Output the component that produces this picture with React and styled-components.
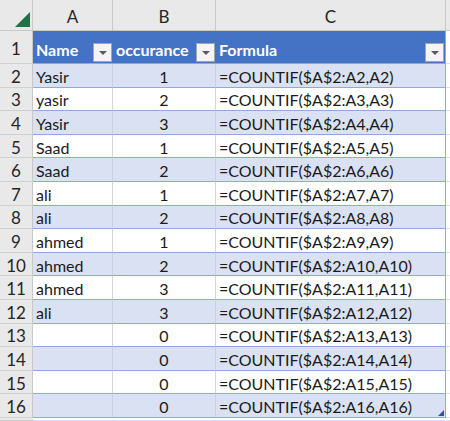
import React from "react";
import styled, { createGlobalStyle } from "styled-components";

const Global = createGlobalStyle`
  html, body { margin: 0; padding: 0; background: #fff; }
  body { font-family: Lato, "Open Sans", sans-serif; }
`;

const Sheet = styled.div`
  display: grid;
  grid-template-columns: 33px 80px 103px 230px 1fr;
  grid-template-rows: 31px 33px repeat(15, 23.6px) 1fr;
  width: 450px;
  height: 421px;
  overflow: hidden;
  font-size: 16px;
  color: #1a1a1a;
`;

const Corner = styled.div`
  position: relative;
  background: #e9e9e9;
  border-right: 1px solid #c8c8c8;
  border-bottom: 1px solid #c8c8c8;
  box-sizing: border-box;
  &::after {
    content: "";
    position: absolute;
    right: 2px;
    bottom: 3px;
    width: 0;
    height: 0;
    border-left: 15px solid transparent;
    border-bottom: 15px solid #217346;
  }
`;

const ColHead = styled.div`
  display: flex;
  align-items: center;
  justify-content: center;
  padding-top: 3px;
  background: #e9e9e9;
  border-right: 1px solid #c8c8c8;
  border-bottom: 1px solid #c8c8c8;
  box-sizing: border-box;
  font-size: 17px;
  color: #262626;
`;

const RowHead = styled.div`
  display: flex;
  align-items: center;
  justify-content: center;
  padding-top: 2px;
  background: #e9e9e9;
  border-right: 1px solid #c8c8c8;
  border-bottom: 1px solid #d0d0d0;
  box-sizing: border-box;
  font-size: 17px;
  color: #262626;
`;

const HeadCell = styled.div`
  position: relative;
  display: flex;
  align-items: center;
  padding: 4px 0 0 3px;
  background: #4472c4;
  color: #fff;
  font-weight: 700;
  border-bottom: 1px solid #8ea9db;
  border-right: ${(p) => (p.$last ? "1px solid #8ea9db" : "none")};
  box-sizing: border-box;
  white-space: nowrap;
  overflow: hidden;
`;

const Filter = styled.span`
  position: absolute;
  right: 1px;
  bottom: 1px;
  width: 19px;
  height: 19px;
  box-sizing: border-box;
  background: #f4f4f4;
  border: 1px solid #a6a6a6;
  display: flex;
  align-items: center;
  justify-content: center;
  &::after {
    content: "";
    border-left: 4px solid transparent;
    border-right: 4px solid transparent;
    border-top: 4px solid #5a5a5a;
  }
`;

const Cell = styled.div`
  position: relative;
  display: flex;
  align-items: center;
  justify-content: ${(p) => (p.$center ? "center" : "flex-start")};
  padding: 2px 0 0 ${(p) => (p.$center ? "0" : "3px")};
  background: ${(p) => (p.$band ? "#d9e1f2" : "#fff")};
  border-bottom: 1px solid #8ea9db;
  border-right: 1px solid ${(p) => (p.$last ? "#8ea9db" : p.$band ? "#c9d1e0" : "#d4d4d4")};
  box-sizing: border-box;
  white-space: nowrap;
  overflow: hidden;
`;

const Resize = styled.span`
  position: absolute;
  right: 1px;
  bottom: 1px;
  width: 0;
  height: 0;
  border-left: 6px solid transparent;
  border-bottom: 6px solid #2f5597;
`;

const Blank = styled.div`
  background: ${(p) => (p.$head ? "#e9e9e9" : "#fff")};
  border-bottom: 1px solid ${(p) => (p.$head ? "#c8c8c8" : "#e1e1e1")};
  box-sizing: border-box;
`;

const rows = [
  ["Yasir", 1],
  ["yasir", 2],
  ["Yasir", 3],
  ["Saad", 1],
  ["Saad", 2],
  ["ali", 1],
  ["ali", 2],
  ["ahmed", 1],
  ["ahmed", 2],
  ["ahmed", 3],
  ["ali", 3],
  ["", 0],
  ["", 0],
  ["", 0],
  ["", 0],
];

export default function App() {
  return (
    <>
      <Global />
      <Sheet>
        <Corner />
        <ColHead>A</ColHead>
        <ColHead>B</ColHead>
        <ColHead>C</ColHead>
        <Blank $head />

        <RowHead>1</RowHead>
        <HeadCell>
          Name
          <Filter />
        </HeadCell>
        <HeadCell>
          occurance
          <Filter />
        </HeadCell>
        <HeadCell $last>
          Formula
          <Filter />
        </HeadCell>
        <Blank />

        {rows.map(([name, n], i) => {
          const r = i + 2;
          const band = r % 2 === 0;
          return (
            <React.Fragment key={r}>
              <RowHead>{r}</RowHead>
              <Cell $band={band}>{name}</Cell>
              <Cell $band={band} $center>
                {n}
              </Cell>
              <Cell $band={band} $last>
                {`=COUNTIF($A$2:A${r},A${r})`}
                {r === 16 && <Resize />}
              </Cell>
              <Blank />
            </React.Fragment>
          );
        })}
        <Blank $head />
        <Blank />
        <Blank />
        <Blank />
        <Blank />
      </Sheet>
    </>
  );
}
